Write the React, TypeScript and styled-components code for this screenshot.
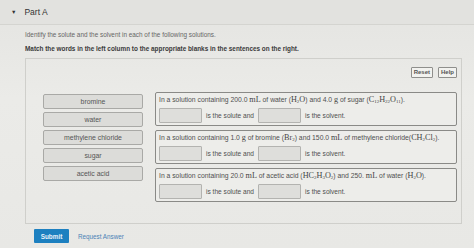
import { createGlobalStyle } from 'styled-components';
import styled from 'styled-components';

const GlobalStyle = createGlobalStyle`
  html, body {
    margin: 0;
    padding: 0;
    background: #e8e8e5;
  }
  body {
    font-family: 'Liberation Sans', Arial, sans-serif;
    color: #444;
  }
`;

const elements = {
  page: styled.div`
    width: 474px;
    height: 248px;
    overflow: hidden;
    background: linear-gradient(180deg, #e4e4e1 0%, #ebebe8 40%, #e8e8e5 100%);
  `,
  header: styled.div`
    height: 25px;
    display: flex;
    align-items: center;
    gap: 8px;
    padding-left: 11px;
    box-sizing: border-box;
    border-bottom: 1px solid #d4d4d0;
    background: #e2e2df;
  `,
  caret: styled.span`
    font-size: 5.5px;
    color: #333;
  `,
  title: styled.span`
    font-size: 8.5px;
    color: #333;
  `,
  body: styled.div`
    padding: 0 12px 0 25px;
  `,
  intro: styled.div`
    margin-top: 6px;
    font-size: 6.4px;
    color: #666;
    line-height: 8px;
  `,
  instruction: styled.div`
    margin-top: 6px;
    font-size: 6.4px;
    font-weight: 700;
    color: #3a3a3a;
    line-height: 8px;
  `,
  frame: styled.div`
    margin-top: 5px;
    height: 166px;
    box-sizing: border-box;
    border: 1px solid #cfcfcb;
    padding: 8px 4px 0 17px;
    display: flex;
    flex-direction: column;
  `,
  toolbar: styled.div`
    display: flex;
    justify-content: flex-end;
    gap: 5px;
  `,
  toolButton: styled.button`
    height: 11px;
    padding: 0 2px;
    font-family: 'Liberation Sans', Arial, sans-serif;
    font-size: 6px;
    font-weight: 700;
    color: #555;
    background: #f2f2ef;
    border: 1px solid #8f8f8c;
    border-radius: 1px;
    line-height: 9px;
  `,
  work: styled.div`
    margin-top: 14px;
    display: flex;
    gap: 12px;
  `,
  tiles: styled.div`
    width: 100px;
    padding-top: 2px;
    display: flex;
    flex-direction: column;
    gap: 3px;
  `,
  tile: styled.div`
    height: 15px;
    box-sizing: border-box;
    border: 1px solid #a9a9a6;
    border-radius: 2px;
    background: #dcdcd9;
    font-size: 6.9px;
    color: #555;
    display: flex;
    align-items: center;
    justify-content: center;
  `,
  sentences: styled.div`
    flex: 1;
    display: flex;
    flex-direction: column;
    gap: 4px;
  `,
  sentence: styled.div`
    height: 34px;
    box-sizing: border-box;
    border: 1px solid #8a8a87;
    border-radius: 2px;
    background: #ededea;
    padding: 2px 3px 0 3px;
  `,
  line: styled.div`
    font-size: 6.8px;
    color: #505050;
    height: 10px;
    line-height: 10px;
    white-space: nowrap;
  `,
  math: styled.span`
    font-family: 'Liberation Serif', 'Times New Roman', serif;
    font-size: 8.2px;
    color: #444;
  `,
  blanks: styled.div`
    display: flex;
    align-items: center;
    margin-top: 3px;
    font-size: 6.6px;
    color: #505050;
  `,
  blank: styled.div`
    width: 43px;
    height: 15px;
    box-sizing: border-box;
    border: 1px solid #b3b3b0;
    border-radius: 1px;
    background: #dededb;
  `,
  blankLabel: styled.span`
    padding: 0 4px;
  `,
  footer: styled.div`
    margin-top: 5px;
    display: flex;
    align-items: center;
    gap: 9px;
    padding-left: 9px;
  `,
  submit: styled.button`
    width: 35px;
    height: 14px;
    border: none;
    border-radius: 1px;
    background: #1d80c0;
    color: #e8f2fa;
    font-family: 'Liberation Sans', Arial, sans-serif;
    font-size: 6.4px;
    font-weight: 700;
    padding: 0;
  `,
  link: styled.span`
    font-size: 6.3px;
    color: #4a82b6;
  `,
};

const Sub = styled.sub`
  font-size: 5px;
  vertical-align: -1px;
`;

const words = ['bromine', 'water', 'methylene chloride', 'sugar', 'acetic acid'];

const M = elements.math;

const Blanks = () => (
  <elements.blanks>
    <elements.blank />
    <elements.blankLabel>is the solute and</elements.blankLabel>
    <elements.blank />
    <elements.blankLabel>is the solvent.</elements.blankLabel>
  </elements.blanks>
);

export default function App() {
  return (
    <>
      <GlobalStyle />
      <elements.page>
        <elements.header>
          <elements.caret>▼</elements.caret>
          <elements.title>Part A</elements.title>
        </elements.header>
        <elements.body>
          <elements.intro>Identify the solute and the solvent in each of the following solutions.</elements.intro>
          <elements.instruction>
            Match the words in the left column to the appropriate blanks in the sentences on the right.
          </elements.instruction>
          <elements.frame>
            <elements.toolbar>
              <elements.toolButton>Reset</elements.toolButton>
              <elements.toolButton>Help</elements.toolButton>
            </elements.toolbar>
            <elements.work>
              <elements.tiles>
                {words.map((w) => (
                  <elements.tile key={w}>{w}</elements.tile>
                ))}
              </elements.tiles>
              <elements.sentences>
                <elements.sentence>
                  <elements.line>
                    In a solution containing 200.0 <M>mL</M> of water (<M>H<Sub>2</Sub>O</M>) and 4.0 <M>g</M> of sugar (
                    <M>
                      C<Sub>12</Sub>H<Sub>22</Sub>O<Sub>11</Sub>
                    </M>
                    ).
                  </elements.line>
                  <Blanks />
                </elements.sentence>
                <elements.sentence>
                  <elements.line>
                    In a solution containing 1.0 <M>g</M> of bromine (<M>Br<Sub>2</Sub></M>) and 150.0 <M>mL</M> of methylene chloride(
                    <M>
                      CH<Sub>2</Sub>Cl<Sub>2</Sub>
                    </M>
                    ).
                  </elements.line>
                  <Blanks />
                </elements.sentence>
                <elements.sentence>
                  <elements.line>
                    In a solution containing 20.0 <M>mL</M> of acetic acid (
                    <M>
                      HC<Sub>2</Sub>H<Sub>3</Sub>O<Sub>2</Sub>
                    </M>
                    ) and 250. <M>mL</M> of water (<M>H<Sub>2</Sub>O</M>).
                  </elements.line>
                  <Blanks />
                </elements.sentence>
              </elements.sentences>
            </elements.work>
          </elements.frame>
          <elements.footer>
            <elements.submit>Submit</elements.submit>
            <elements.link>Request Answer</elements.link>
          </elements.footer>
        </elements.body>
      </elements.page>
    </>
  );
}
